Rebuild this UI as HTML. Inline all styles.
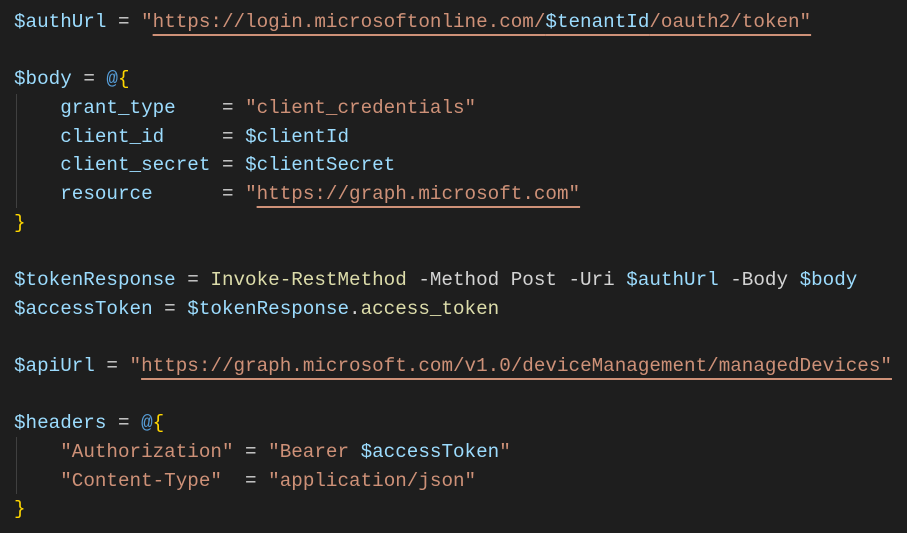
<!DOCTYPE html>
<html><head><style>
html,body{margin:0;padding:0;background:#1e1e1e;width:907px;height:533px;overflow:hidden}
pre{margin:0;position:absolute;left:14px;top:8px;font-family:"Liberation Mono",monospace;font-size:19.25px;line-height:28.65px;color:#d4d4d4}
.v{color:#9cdcfe}.s{color:#ce9178}.k{color:#569cd6}.b{color:#ffd700}.f{color:#dcdcaa}
.u{text-decoration:underline;text-decoration-color:#ce9178;text-decoration-thickness:2px;text-underline-offset:7px}
.g{position:absolute;left:16px;width:1px;background:#404040}
</style></head><body>
<div class="g" style="top:94px;height:114px"></div>
<div class="g" style="top:437px;height:57px"></div>
<pre><span class="v">$authUrl</span> = <span class="s">"<span class="u">https://login.microsoftonline.com/<span class="v">$tenantId</span>/oauth2/token"</span></span>

<span class="v">$body</span> = <span class="k">@</span><span class="b">{</span>
    <span class="v">grant_type</span>    = <span class="s">"client_credentials"</span>
    <span class="v">client_id</span>     = <span class="v">$clientId</span>
    <span class="v">client_secret</span> = <span class="v">$clientSecret</span>
    <span class="v">resource</span>      = <span class="s">"<span class="u">https://graph.microsoft.com"</span></span>
<span class="b">}</span>

<span class="v">$tokenResponse</span> = <span class="f">Invoke-RestMethod</span> -Method Post -Uri <span class="v">$authUrl</span> -Body <span class="v">$body</span>
<span class="v">$accessToken</span> = <span class="v">$tokenResponse</span>.<span class="f">access_token</span>

<span class="v">$apiUrl</span> = <span class="s">"<span class="u">https://graph.microsoft.com/v1.0/deviceManagement/managedDevices"</span></span>

<span class="v">$headers</span> = <span class="k">@</span><span class="b">{</span>
    <span class="s">"Authorization"</span> = <span class="s">"Bearer <span class="v">$accessToken</span>"</span>
    <span class="s">"Content-Type"</span>  = <span class="s">"application/json"</span>
<span class="b">}</span></pre>
</body></html>
